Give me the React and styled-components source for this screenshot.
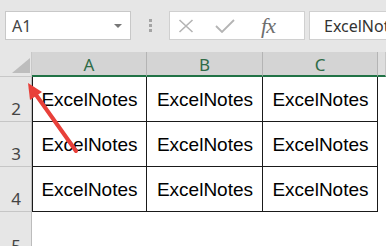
import React from "react";
import styled, { createGlobalStyle } from "styled-components";

const Global = createGlobalStyle`
  html, body { margin: 0; padding: 0; background: #ffffff; }
  body { width: 386px; height: 246px; overflow: hidden; }
`;

const Page = styled.div`
  position: relative;
  width: 386px;
  height: 246px;
  overflow: hidden;
  font-family: "Noto Sans", "Open Sans", sans-serif;
`;

const Toolbar = styled.div`
  height: 52px;
  box-sizing: border-box;
  background: #e6e6e6;
  display: flex;
  align-items: flex-start;
  padding: 11px 0 0 5px;
`;

const NameBox = styled.div`
  width: 126px;
  height: 29px;
  box-sizing: border-box;
  background: #fff;
  border: 1px solid #c8c8c8;
  display: flex;
  align-items: center;
  justify-content: space-between;
  padding: 0 8px 0 6px;
  font-size: 16px;
  color: #444;
`;

const Caret = styled.span`
  width: 0;
  height: 0;
  border-left: 4px solid transparent;
  border-right: 4px solid transparent;
  border-top: 4px solid #777;
`;

const DotsArea = styled.div`
  width: 38px;
  height: 29px;
  display: flex;
  flex-direction: column;
  align-items: center;
  justify-content: center;
  gap: 2px;
  padding-left: 1px;
  box-sizing: border-box;
`;

const Dot = styled.span`
  width: 3px;
  height: 3px;
  background: #a4a4a4;
`;

const ButtonsBox = styled.div`
  width: 136px;
  height: 29px;
  box-sizing: border-box;
  background: #fff;
  border: 1px solid #d0d0d0;
  display: flex;
  align-items: center;
  margin-right: 4px;
`;

const IconSlot = styled.span`
  width: ${(p) => p.$w}px;
  height: 27px;
  display: flex;
  align-items: center;
  justify-content: center;
`;

const Fx = styled.span`
  font-family: "Liberation Serif", "DejaVu Serif", serif;
  font-style: italic;
  font-size: 22px;
  color: #6e6e6e;
  letter-spacing: -1px;
`;

const FormulaInput = styled.div`
  flex: 1;
  height: 29px;
  box-sizing: border-box;
  background: #fff;
  border: 1px solid #d0d0d0;
  border-right: none;
  display: flex;
  align-items: center;
  padding-left: 14px;
  font-size: 16px;
  color: #333;
  white-space: nowrap;
  overflow: hidden;
`;

const Sheet = styled.div`
  display: grid;
  grid-template-columns: 32px 115px 116px 115px 1fr;
  grid-template-rows: 25px 45px 45px 45px 1fr;
  height: 194px;
`;

const Corner = styled.div`
  position: relative;
  background: #e6e6e6;
  border-right: 1px solid #c8c8c8;
  border-bottom: 1px solid #c8c8c8;
  box-sizing: border-box;
  &::after {
    content: "";
    position: absolute;
    right: 1px;
    bottom: 3px;
    width: 0;
    height: 0;
    border-left: 18px solid transparent;
    border-bottom: 15px solid #bdbdbd;
  }
`;

const ColHead = styled.div`
  box-sizing: border-box;
  background: ${(p) => (p.$selected ? "#d4d4d4" : "#dedede")};
  border-right: 1px solid ${(p) => (p.$selected ? "#b4b4b4" : "#c8c8c8")};
  border-bottom: 2px solid #217346;
  display: flex;
  align-items: center;
  justify-content: center;
  font-size: 17px;
  color: #2f6b47;
  padding-top: 1px;
`;

const RowHead = styled.div`
  box-sizing: border-box;
  background: #e6e6e6;
  border-right: 1px solid #bcbcbc;
  border-bottom: 1px solid #c6c6c6;
  display: flex;
  align-items: flex-end;
  justify-content: center;
  font-size: 17px;
  line-height: 1;
  color: #444;
  padding-bottom: 4px;
  padding-left: 1px;
`;

const LastRowHead = styled(RowHead)`
  border-bottom: none;
  padding-bottom: 0;
  margin-bottom: -8px;
`;

const Cell = styled.div`
  box-sizing: border-box;
  background: #fff;
  border-right: 1px solid #1a1a1a;
  border-bottom: 1px solid #1a1a1a;
  border-left: ${(p) => (p.$first ? "1px solid #1a1a1a" : "none")};
  display: flex;
  align-items: center;
  justify-content: center;
  font-family: "Liberation Sans", Arial, sans-serif;
  font-size: 19px;
  color: #000;
  padding-left: ${(p) => (p.$first ? "0" : "1px")};
  padding-top: 1px;
`;

const Blank = styled.div`
  background: #fff;
`;

const Overlay = styled.svg`
  position: absolute;
  left: 0;
  top: 0;
  pointer-events: none;
`;

const cols = ["A", "B", "C"];
const rows = [2, 3, 4];

export default function App() {
  return (
    <>
      <Global />
      <Page>
        <Toolbar>
          <NameBox>
            <span>A1</span>
            <Caret />
          </NameBox>
          <DotsArea>
            <Dot />
            <Dot />
            <Dot />
          </DotsArea>
          <ButtonsBox>
            <IconSlot $w={32}>
              <svg width="16" height="14" viewBox="0 0 16 14">
                <path d="M1.5 1 L14.5 13 M14.5 1 L1.5 13" stroke="#b4b4b4" strokeWidth="1.6" fill="none" />
              </svg>
            </IconSlot>
            <IconSlot $w={45}>
              <svg width="20" height="14" viewBox="0 0 20 14">
                <path d="M1 7 L7 13 L19 1" stroke="#b4b4b4" strokeWidth="1.8" fill="none" />
              </svg>
            </IconSlot>
            <IconSlot $w={42}>
              <Fx>fx</Fx>
            </IconSlot>
          </ButtonsBox>
          <FormulaInput>ExcelNotes</FormulaInput>
        </Toolbar>
        <Sheet>
          <Corner />
          {cols.map((c) => (
            <ColHead key={c} $selected>
              {c}
            </ColHead>
          ))}
          <ColHead />
          {rows.map((r) => (
            <React.Fragment key={r}>
              <RowHead>{r}</RowHead>
              {cols.map((c, i) => (
                <Cell key={c} $first={i === 0}>
                  ExcelNotes
                </Cell>
              ))}
              <Blank />
            </React.Fragment>
          ))}
          <LastRowHead>5</LastRowHead>
          <Blank />
          <Blank />
          <Blank />
          <Blank />
        </Sheet>
        <Overlay width="386" height="246" viewBox="0 0 386 246">
          <line x1="76" y1="151" x2="34" y2="92" stroke="#e8403a" strokeWidth="4" strokeLinecap="round" />
          <polygon points="28,83 42,92 30,100" fill="#e8403a" />
        </Overlay>
      </Page>
    </>
  );
}
